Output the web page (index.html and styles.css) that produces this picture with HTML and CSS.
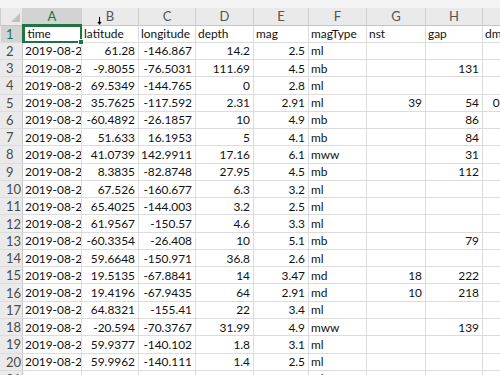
FILE: index.html
```html
<!DOCTYPE html>
<html lang="en">
<head>
  <meta charset="UTF-8" />
  <title>earthquakes.csv</title>
  <link rel="stylesheet" href="styles.css">
</head>
<body>

  <div class="strip"></div>

  <table class="sheet">
    <colgroup>
      <col class="c-head">
      <col class="c-a"><col class="c-b"><col class="c-c"><col class="c-d">
      <col class="c-e"><col class="c-f"><col class="c-g"><col class="c-h"><col class="c-i">
    </colgroup>
    <thead>
      <tr>
        <th class="corner"><span class="tri"></span></th>
        <th class="sel">A</th><th>B</th><th>C</th><th>D</th><th>E</th><th>F</th><th>G</th><th>H</th><th>I</th>
      </tr>
    </thead>
    <tbody>
      <tr><th class="sel">1</th><td class="active">time</td><td>latitude</td><td>longitude</td><td>depth</td><td>mag</td><td>magType</td><td>nst</td><td>gap</td><td>dmin</td></tr>
      <tr><th>2</th><td>2019-08-2</td><td>61.28</td><td>-146.867</td><td>14.2</td><td>2.5</td><td>ml</td><td></td><td></td><td></td></tr>
      <tr><th>3</th><td>2019-08-2</td><td>-9.8055</td><td>-76.5031</td><td>111.69</td><td>4.5</td><td>mb</td><td></td><td>131</td><td></td></tr>
      <tr><th>4</th><td>2019-08-2</td><td>69.5349</td><td>-144.765</td><td>0</td><td>2.8</td><td>ml</td><td></td><td></td><td></td></tr>
      <tr><th>5</th><td>2019-08-2</td><td>35.7625</td><td>-117.592</td><td>2.31</td><td>2.91</td><td>ml</td><td>39</td><td>54</td><td>0.05397</td></tr>
      <tr><th>6</th><td>2019-08-2</td><td>-60.4892</td><td>-26.1857</td><td>10</td><td>4.9</td><td>mb</td><td></td><td>86</td><td></td></tr>
      <tr><th>7</th><td>2019-08-2</td><td>51.633</td><td>16.1953</td><td>5</td><td>4.1</td><td>mb</td><td></td><td>84</td><td></td></tr>
      <tr><th>8</th><td>2019-08-2</td><td>41.0739</td><td>142.9911</td><td>17.16</td><td>6.1</td><td>mww</td><td></td><td>31</td><td></td></tr>
      <tr><th>9</th><td>2019-08-2</td><td>8.3835</td><td>-82.8748</td><td>27.95</td><td>4.5</td><td>mb</td><td></td><td>112</td><td></td></tr>
      <tr><th>10</th><td>2019-08-2</td><td>67.526</td><td>-160.677</td><td>6.3</td><td>3.2</td><td>ml</td><td></td><td></td><td></td></tr>
      <tr><th>11</th><td>2019-08-2</td><td>65.4025</td><td>-144.003</td><td>3.2</td><td>2.5</td><td>ml</td><td></td><td></td><td></td></tr>
      <tr><th>12</th><td>2019-08-2</td><td>61.9567</td><td>-150.57</td><td>4.6</td><td>3.3</td><td>ml</td><td></td><td></td><td></td></tr>
      <tr><th>13</th><td>2019-08-2</td><td>-60.3354</td><td>-26.408</td><td>10</td><td>5.1</td><td>mb</td><td></td><td>79</td><td></td></tr>
      <tr><th>14</th><td>2019-08-2</td><td>59.6648</td><td>-150.971</td><td>36.8</td><td>2.6</td><td>ml</td><td></td><td></td><td></td></tr>
      <tr><th>15</th><td>2019-08-2</td><td>19.5135</td><td>-67.8841</td><td>14</td><td>3.47</td><td>md</td><td>18</td><td>222</td><td></td></tr>
      <tr><th>16</th><td>2019-08-2</td><td>19.4196</td><td>-67.9435</td><td>64</td><td>2.91</td><td>md</td><td>10</td><td>218</td><td></td></tr>
      <tr><th>17</th><td>2019-08-2</td><td>64.8321</td><td>-155.41</td><td>22</td><td>3.4</td><td>ml</td><td></td><td></td><td></td></tr>
      <tr><th>18</th><td>2019-08-2</td><td>-20.594</td><td>-70.3767</td><td>31.99</td><td>4.9</td><td>mww</td><td></td><td>139</td><td></td></tr>
      <tr><th>19</th><td>2019-08-2</td><td>59.9377</td><td>-140.102</td><td>1.8</td><td>3.1</td><td>ml</td><td></td><td></td><td></td></tr>
      <tr><th>20</th><td>2019-08-2</td><td>59.9962</td><td>-140.111</td><td>1.4</td><td>2.5</td><td>ml</td><td></td><td></td><td></td></tr>
      <tr><th>21</th><td>2019-08-2</td><td>59.8349</td><td>-149.342</td><td>1.6</td><td>2.3</td><td>ml</td><td></td><td></td><td></td></tr>
    </tbody>
  </table>

  <!-- column select cursor -->
  <svg class="cursor" width="7" height="10" viewBox="0 0 7 10">
    <path d="M2.5 0.5 H4.5 V5.5 H6.5 L3.5 9.5 L0.5 5.5 H2.5 Z" fill="#000" stroke="#fff" stroke-width="0.8"/>
  </svg>

</body>
</html>
```

FILE: styles.css
```css
body {
  margin: 0;
  background: #fff;
  font-family: Lato, "Liberation Sans", sans-serif;
  overflow: hidden;
}
.strip {
  height: 8px;
  background: #f4f4f4;
}
.sheet {
  border-collapse: collapse;
  table-layout: fixed;
  width: 540px;
}
.c-head { width: 22px; }
.c-a { width: 59px; }
.c-b { width: 57px; }
.c-c { width: 57px; }
.c-d { width: 58px; }
.c-e { width: 55px; }
.c-f { width: 58px; }
.c-g { width: 59px; }
.c-h { width: 57px; }
.c-i { width: 58px; }

.sheet th,
.sheet td {
  padding: 0 3px 0 2px;
  white-space: nowrap;
  overflow: hidden;
}
.sheet td {
  border: 1px solid #dcdcdc;
  font-size: 11.9px;
  color: #111;
  text-align: right;
}
.sheet td:nth-child(2),
.sheet td:nth-child(7),
.sheet tbody tr:first-child td {
  text-align: left;
}
.sheet th {
  background: #eaeaea;
  color: #555;
  font-weight: normal;
  font-size: 13px;
  border: 1px solid #cfcfcf;
}
.sheet thead th {
  height: 16px;
  padding: 0;
  text-align: center;
  border-top: none;
  border-bottom-color: #c4c4c4;
}
.sheet tbody tr {
  height: 17.27px;
}
.sheet tbody th {
  text-align: left;
  padding: 0 0 0 5px;
  font-size: 13px;
  color: #4a4a4a;
  border-color: #dcdcdc #c8c8c8 #dcdcdc #eaeaea;
}
.sheet th.sel {
  background: #d3d3d3;
  color: #217346;
}
.sheet thead th.sel {
  border-bottom: 2px solid #217346;
}
.sheet tbody th.sel {
  border-right: 2px solid #217346;
}
.corner {
  position: relative;
}
.tri {
  position: absolute;
  right: 2px;
  bottom: 3px;
  width: 0;
  height: 0;
  border-left: 9px solid transparent;
  border-bottom: 9px solid #c0c0c0;
}
.sheet td.active {
  position: relative;
  overflow: visible;
  padding-left: 4px;
}
.sheet td.active::after {
  content: "";
  position: absolute;
  left: -1px;
  top: -1px;
  right: -1px;
  bottom: -1px;
  border: 2px solid #217346;
}
.sheet td.active::before {
  content: "";
  position: absolute;
  right: -3px;
  bottom: -3px;
  width: 4px;
  height: 4px;
  background: #217346;
  border: 1px solid #fff;
  z-index: 1;
}
.cursor {
  position: absolute;
  left: 96px;
  top: 16px;
}
```
